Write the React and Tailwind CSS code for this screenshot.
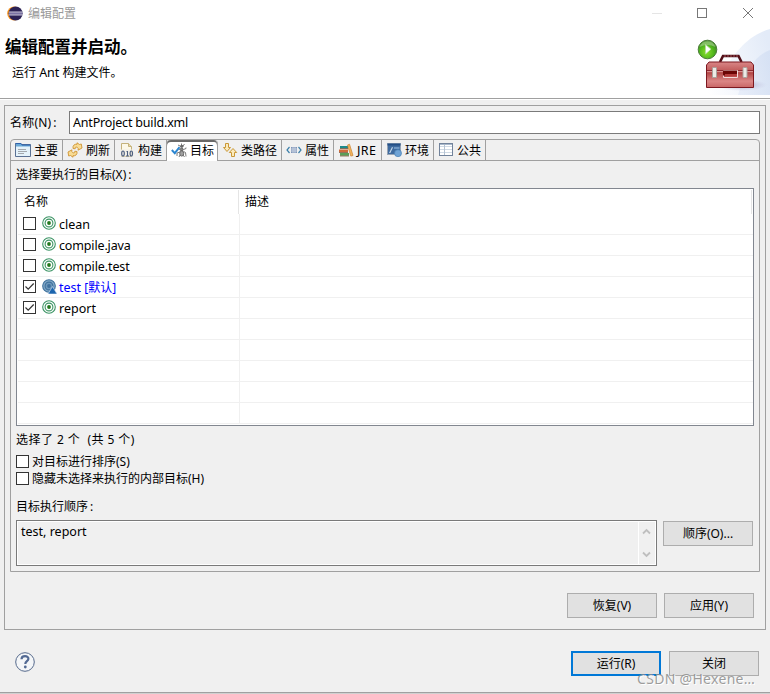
import React from 'react';
import clsx from 'clsx';

const EclipseIcon = () => (
    <svg width="16" height="16" viewBox="0 0 16 16">
        <circle cx="7.2" cy="7.500" r="7" fill="#f7941e" />
        <circle cx="8.6" cy="7.500" r="7" fill="#2c2255" />
        <path d="M2 6.100h13.3M1.7 8.900h13.8" stroke="#c9c5dd" strokeWidth="1.3" />
        <path d="M1.7 7.500h13.8" stroke="#7a72a3" strokeWidth="1.200" />
    </svg>
);

const ToolboxArt = () => (
    <svg width="90" height="70" viewBox="0 0 90 70">
        <defs>
            <linearGradient id="sky" x1="0" y1="0.6" x2="1" y2="0.3">
                <stop offset="0" stopColor="#ffffff" />
                <stop offset="0.35" stopColor="#f5f8fd" />
                <stop offset="1" stopColor="#e3ebf8" />
            </linearGradient>
            <linearGradient id="inner" x1="0" y1="0.6" x2="1" y2="0.3">
                <stop offset="0" stopColor="#e4ebf8" />
                <stop offset="1" stopColor="#d3dff3" />
            </linearGradient>
            <linearGradient id="box" x1="0" y1="0" x2="0" y2="1">
                <stop offset="0" stopColor="#d98787" />
                <stop offset="0.35" stopColor="#c15a5a" />
                <stop offset="0.45" stopColor="#b54c4c" />
                <stop offset="0.75" stopColor="#db8686" />
                <stop offset="1" stopColor="#c96666" />
            </linearGradient>
            <radialGradient id="run" cx="0.45" cy="0.65" r="0.6">
                <stop offset="0" stopColor="#8be02c" />
                <stop offset="0.65" stopColor="#4fb51c" />
                <stop offset="1" stopColor="#3f8a24" />
            </radialGradient>
            <radialGradient id="shade">
                <stop offset="0" stopColor="#8c7fa6" stopOpacity="0.75" />
                <stop offset="1" stopColor="#b9b8dc" stopOpacity="0" />
            </radialGradient>
        </defs>
        <path d="M90 4C66 11 54 30 44 45L20 70H90Z" fill="url(#sky)" />
        <path d="M90 25C76 30 65 45 58 70H90Z" fill="url(#inner)" opacity="0.800" />
        <ellipse cx="61" cy="60" rx="26" ry="6" fill="url(#shade)" />
        <path d="M40 37l3-6h15.500l3 6" fill="none" stroke="#521018" strokeWidth="2.600" />
        <path d="M44 31h14" stroke="#a05058" strokeWidth="1" strokeDasharray="2 1" />
        <path d="M29 37h42l2.500 3v22.500h-47v-22.500z" fill="url(#box)" stroke="#7d1820" strokeLinejoin="round" />
        <path d="M27 45.500h46" stroke="#8d2830" />
        <path d="M27 46.500h46" stroke="#d98f8f" />
        <path d="M43.500 45.500h14v7h-14z" fill="#bb4d4d" stroke="#f2dada" />
        <path d="M43 45.500h14v5h-14z" fill="#6b0505" />
        <path d="M45 50h12" stroke="#b33c3c" strokeWidth="2" />
        <rect x="32.500" y="42.500" width="4" height="10" rx="0.5" fill="#eceae6" stroke="#aaa39d" />
        <rect x="63" y="42.500" width="4" height="10" rx="0.500" fill="#eceae6" stroke="#aaa39d" />
        <circle cx="27.500" cy="24.500" r="9.300" fill="url(#run)" stroke="#4b7b39" />
        <path d="M19.500 22a8.500 8.500 0 0 1 16 0q-8-4-16 0z" fill="#9ccc83" opacity="0.7" />
        <path d="M25.500 19.500v9.500l5.500-4.800z" fill="#fff" stroke="#b4d99a" strokeWidth="0.800" />
    </svg>
);

const MainIcon = () => (
    <svg width="16" height="16" viewBox="0 0 16 16">
        <path d="M.5 1.500h5.500l1 1h8.500v12h-15z" fill="#e4f2fa" stroke="#5a7194" />
        <path d="M1 2h5l1 1h8v1.500h-14z" fill="#69a8d6" />
        <path d="M.5 1.500h5.500l1 1.500h8.500" fill="none" stroke="#2f63ad" />
        <path d="M3 7.500h8M3 9.500h9M3 11.500h6" stroke="#a3a8ad" />
    </svg>
);

const RefreshIcon = () => (
    <svg width="16" height="16" viewBox="0 0 16 16" fill="#f8dc94" stroke="#cf9433" strokeWidth="0.900" strokeLinejoin="round">
        <path d="M6 6.500C5.500 3.500 7.500 1.800 10 2.300V.8L12.500 2.500l1.800-.5.7 4-4 2.200.3-1.500-1.200-1.500C8.500 4.700 8 5.500 8.200 6.800z" />
        <path d="M10 9.500c.5 3-1.500 4.700-4 4.200v1.500L3.500 13.500l-1.800.5-.7-4 4-2.200-.3 1.500 1.200 1.500c1.600.5 2.100-.3 1.900-1.600z" />
    </svg>
);

const BuildIcon = () => (
    <svg width="16" height="16" viewBox="0 0 16 16">
        <path d="M2.500 1.500h7l3 3v10h-10z" fill="#fcf8e8" stroke="#c4b27c" />
        <path d="M9.500 1.500v3h3" fill="#ead9a6" stroke="#c4b27c" />
        <rect x="1.500" y="7.500" width="13" height="7" fill="#f2f0e8" opacity="0.900" />
        <ellipse cx="4" cy="11.500" rx="1.300" ry="2.500" fill="none" stroke="#4d5f80" strokeWidth="1.200" />
        <path d="M7.500 9.500h1v4.500M7 14h3" fill="none" stroke="#4d5f80" strokeWidth="1.100" />
        <ellipse cx="12.300" cy="11.500" rx="1.200" ry="2.500" fill="none" stroke="#4d5f80" strokeWidth="1.200" />
    </svg>
);

const TargetsIcon = () => (
    <svg width="16" height="16" viewBox="0 0 16 16" fill="none">
        <path d="M10.500 1.500v2M9 4L7 3M12 4l1.500-2M9 7.500L7 6.500M9 10l-3 1v3M12.500 7.500L15 6.500v-1M12.500 9.500l2 1 .5 4M9 13l-1 2M12 13l1.500 2" stroke="#6c6c6c" strokeWidth="0.900" />
        <ellipse cx="10.700" cy="4.300" rx="1.700" ry="1.500" fill="#666" />
        <ellipse cx="10.700" cy="7.500" rx="1.500" ry="1.400" fill="#888" stroke="#555" strokeWidth="0.800" />
        <ellipse cx="10.700" cy="11.500" rx="2" ry="2.600" fill="#a0a0a0" stroke="#5e5e5e" strokeWidth="0.900" />
        <path d="M.8 8l3 3.200 4.700-6" stroke="#2b86d1" strokeWidth="1.900" />
    </svg>
);

const ClasspathIcon = () => (
    <svg width="16" height="16" viewBox="0 0 16 16" fill="#fbeabb" stroke="#c99836" strokeLinejoin="round">
        <path d="M3.500 1.500h3v4h2l-3.500 4-3.500-4h2z" />
        <path d="M9.500 14.500h3v-4h2.200l-3.700-4-3.700 4h2.200z" />
    </svg>
);

const PropertiesIcon = () => (
    <svg width="16" height="16" viewBox="0 0 16 16" fill="none">
        <path d="M3.500 5L1 8l2.500 3M12.500 5L15 8l-2.500 3" stroke="#3c7fa9" strokeWidth="1.200" />
        <rect x="5" y="5" width="6" height="6" fill="#8095b8" />
        <path d="M5 7h6M5 9h6M7 5v6M9 5v6" stroke="#dce4ee" strokeWidth="0.700" />
    </svg>
);

const JreIcon = () => (
    <svg width="16" height="16" viewBox="0 0 16 16">
        <rect x="2" y="4" width="8" height="2.500" fill="#1d8a8a" />
        <rect x="1" y="7.500" width="9" height="2.800" fill="#cf6a3a" />
        <rect x="2" y="11" width="9" height="2.800" fill="#5a9e58" />
        <path d="M2 6.500h8M1 10.500h9M2 14h9" stroke="#7d5c40" strokeWidth="0.800" />
        <path d="M9.500 3l2-.8 3.500 11.300-2.200.6z" fill="#f5b65c" stroke="#c98334" strokeWidth="0.700" />
    </svg>
);

const EnvIcon = () => (
    <svg width="16" height="16" viewBox="0 0 16 16">
        <rect x="1.500" y="1.500" width="13" height="11" fill="#3f6b9f" stroke="#98a5b5" />
        <path d="M1.500 2.500h13" stroke="#234f86" strokeWidth="2" />
        <path d="M3 11l3-6 1 .6-2.700 5.400z" fill="#c6d9eb" />
        <path d="M8 5h5.500v2h-5.500z" fill="#6d97c4" />
        <circle cx="12" cy="11.200" r="3.500" fill="#6fa3d5" stroke="#4b82b6" strokeWidth="0.700" />
    </svg>
);

const CommonIcon = () => (
    <svg width="16" height="16" viewBox="0 0 16 16">
        <rect x="1.500" y="1.500" width="13" height="12" fill="#fff" stroke="#72839b" />
        <path d="M2 2.500h12" stroke="#a9b9cc" />
        <path d="M2 4.500h12M2 7.500h12M2 10.500h12" stroke="#d0dae5" />
        <path d="M6.500 3v10" stroke="#b5c3d3" />
    </svg>
);

const TargetIcon = ({ isDefault }) => {
    const color = isDefault ? '#3f719c' : '#3b9464';
    return (
        <svg width="15" height="15" viewBox="0 0 15 15">
            <circle cx="7" cy="7" r="6.300" fill={isDefault ? '#83a9c8' : '#fff'} stroke={color} strokeWidth="1.100" />
            <circle cx="7" cy="7" r="3.900" fill={isDefault ? '#6c97bb' : '#fff'} stroke={color} strokeWidth="1.100" />
            <circle cx="7" cy="7" r="1.900" fill={isDefault ? '#3d6f9c' : '#23781e'} />
            {isDefault && <path d="M10.500 7.500L15 15H6z" fill="#1c65ae" stroke="#c4d8ea" strokeWidth="0.700" />}
        </svg>
    );
};

const tabs = [
    { label: '主要', Icon: MainIcon, width: 'w-[52px]' },
    { label: '刷新', Icon: RefreshIcon, width: 'w-[52px]' },
    { label: '构建', Icon: BuildIcon, width: 'w-[52px]' },
    { label: '目标', Icon: TargetsIcon, width: 'w-[51px]', active: true },
    { label: '类路径', Icon: ClasspathIcon, width: 'w-[64px]' },
    { label: '属性', Icon: PropertiesIcon, width: 'w-[52px]' },
    { label: 'JRE', Icon: JreIcon, width: 'w-[48px]' },
    { label: '环境', Icon: EnvIcon, width: 'w-[52px]' },
    { label: '公共', Icon: CommonIcon, width: 'w-[52px]' },
];

const targets = [
    { name: 'clean' },
    { name: 'compile.java', spacing: 'tracking-[-0.15px]' },
    { name: 'compile.test', spacing: 'tracking-[-0.1px]' },
    { name: 'test', isDefault: true, checked: true },
    { name: 'report', checked: true },
];

const Checkbox = ({ checked }) => (
    <span className="w-[13px] h-[13px] shrink-0 border border-[#333] bg-white">
        {checked && (
            <svg width="11" height="11" viewBox="0 0 11 11" className="block">
                <path d="M1.500 5.500l2.700 2.700L9.700 2.500" fill="none" stroke="#333" strokeWidth="1.200" />
            </svg>
        )}
    </span>
);

const Button = ({ children, primary }) => (
    <button
        className={clsx(
            'w-[90px] h-[25px] shrink-0 bg-[#e1e1e1] flex items-center justify-center',
            primary ? 'border-2 border-[#0078d7]' : 'border border-[#adadad]'
        )}
    >
        {children}
    </button>
);

const Tab = ({ tab }) => (
    <div
        className={clsx(
            'h-full shrink-0 flex items-center gap-[3px] pl-1 border-r border-[#a0a0a0] whitespace-nowrap',
            tab.width,
            tab.active ? 'pb-px bg-white shadow-[inset_0_2px_0_#696969,-1px_0_0_#a0a0a0] rounded-t-sm' : 'border-b'
        )}
    >
        <tab.Icon />
        <span className={clsx('pt-[2px]', tab.label === 'JRE' && 'text-[12.5px] tracking-[0.4px]')}>{tab.label}</span>
    </div>
);

const TargetTable = () => (
    <div className="w-[738px] h-[238px] border border-[#828790] bg-white">
        <div className="h-[25px] flex items-center pr-px pt-px">
            <div className="w-[222px] h-6 shrink-0 pl-[7px] border-r border-[#e5e5e5] flex items-center">名称</div>
            <div className="flex-1 h-6 pl-[6px] border-r border-[#e5e5e5] flex items-center">描述</div>
        </div>
        {Array.from({ length: 10 }, (_, i) => {
            const target = targets[i];
            return (
                <div key={i} className="h-[21px] ml-px flex border-b border-[#f0f0f0]">
                    <div className="w-[222px] shrink-0 border-r border-[#f0f0f0] flex items-center pl-[5px]">
                        {target && (
                            <>
                                <div className="-mt-px flex items-center gap-[6px]">
                                    <Checkbox checked={target.checked} />
                                    <TargetIcon isDefault={target.isDefault} />
                                </div>
                                <span
                                    className={clsx(
                                        'ml-[2px] pt-[2px] text-[12.5px] whitespace-pre',
                                        target.spacing,
                                        target.isDefault && 'text-[#0000ff]'
                                    )}
                                >
                                    {target.name}
                                    {target.isDefault && <span className="text-[12px]"> [默认]</span>}
                                </span>
                            </>
                        )}
                    </div>
                </div>
            );
        })}
    </div>
);

const App = () => (
    <div className="w-[770px] h-[694px] overflow-hidden bg-[#f0f0f0] text-black text-[12px] leading-4 font-['Noto_Sans','Noto_Sans_CJK_SC',sans-serif] flex flex-col relative">
        <header className="h-[100px] shrink-0 bg-white shadow-[inset_0_-1px_0_#fff,inset_0_-2px_0_#a0a0a0] relative">
            <div className="h-[27px] flex items-center text-[#999] pl-[7px]">
                <EclipseIcon />
                <span className="ml-[5px] pt-px">编辑配置</span>
                <svg width="102" height="12" viewBox="0 0 102 12" fill="none" className="ml-auto mr-[16px] -mt-[2px]">
                    <path d="M0 6.500h10" stroke="#e5e5e5" />
                    <rect x="45.500" y="1.500" width="9" height="9" stroke="#777" />
                    <path d="M91 1l10 10M101 1l-10 10" stroke="#777" />
                </svg>
            </div>
            <div className="absolute right-0 top-[25px]">
                <ToolboxArt />
            </div>
            <h1 className="mt-[9px] ml-[5px] text-[16.5px] leading-[22px] font-bold">编辑配置并启动。</h1>
            <p className="mt-[7px] ml-[12px]">运行 <span className="text-[12.5px]">Ant</span> 构建文件。</p>
        </header>

        <main className="mt-[5px] ml-1 w-[762px] h-[525px] shrink-0 border border-[#a0a0a0] pt-[5px] pl-[5px]">
            <div className="flex items-center h-[23px]">
                <span className="w-[59px] shrink-0 pt-px tracking-[0.2px]">名称(N)<span className="ml-[2px]">:</span></span>
                <div className="w-[691px] h-[23px] border border-[#7a7a7a] bg-white flex items-center pl-[3px] pt-px text-[12.5px] tracking-[-0.18px]">
                    AntProject build.xml
                </div>
            </div>

            <section className="mt-[5px] w-[750px] h-[433px] border border-[#a0a0a0] rounded-t-[4px]">
                <div className="h-[21px] flex">
                    {tabs.map((tab) => (
                        <Tab key={tab.label} tab={tab} />
                    ))}
                    <div className="flex-1 border-b border-[#a0a0a0]" />
                </div>
                <div className="pl-[5px] flex flex-col">
                    <div className="h-[27px] flex items-center">选择要执行的目标(X)<span className="ml-[2px]">:</span></div>
                    <TargetTable />
                    <div className="mt-[5px] h-[18px] flex items-center whitespace-pre tracking-[0.45px]">选择了 2 个  (共 5 个)</div>
                    <div className="mt-[4px] h-[17px] flex items-center gap-[3px]">
                        <Checkbox />
                        <span>对目标进行排序(S)</span>
                    </div>
                    <div className="h-[17px] flex items-center gap-[3px]">
                        <Checkbox />
                        <span>隐藏未选择来执行的内部目标(H)</span>
                    </div>
                    <div className="mt-[11px] h-[18px] flex items-center">目标执行顺序<span className="ml-[2px]">:</span></div>
                    <div className="mt-[4px] flex items-start gap-[6px]">
                        <div className="w-[641px] h-[46px] shrink-0 border border-[#7a7a7a] shadow-[inset_0_0_0_1px_#fff] flex justify-between">
                            <span className="pl-1 pt-[3px] text-[12.5px]">test, report</span>
                            <div className="w-[18px] border-l border-white flex flex-col justify-between items-center py-[7px] pr-[2px]">
                                <svg width="9" height="7" viewBox="0 0 9 7" fill="none" stroke="#bfbfbf" strokeWidth="1.800">
                                    <path d="M1 5.500l3.500-3.500L8 5.500" />
                                </svg>
                                <svg width="9" height="7" viewBox="0 0 9 7" fill="none" stroke="#bfbfbf" strokeWidth="1.800">
                                    <path d="M1 1.500l3.500 3.500L8 1.500" />
                                </svg>
                            </div>
                        </div>
                        <div className="pt-px">
                            <Button>顺序(O)...</Button>
                        </div>
                    </div>
                </div>
            </section>

            <div className="mt-[21px] pr-[11px] flex justify-end gap-[7px]">
                <Button>恢复(V)</Button>
                <Button>应用(Y)</Button>
            </div>
        </main>

        <footer className="mt-[21px] h-[25px] shrink-0 pl-[15px] pr-[11px] flex items-center">
            <svg width="20" height="20" viewBox="0 0 20 20" fill="none" className="-mt-[3px]">
                <circle cx="10" cy="10" r="9.300" fill="#f4f6f8" stroke="#566a8c" />
                <path d="M6.500 7.300c0-4.200 7.200-4 6.900-.5-.2 2.400-3.100 2.300-3.100 5.200" stroke="#536a93" strokeWidth="2.200" />
                <circle cx="10.300" cy="15" r="1.400" fill="#536a93" />
            </svg>
            <div className="ml-auto flex gap-2">
                <Button primary>运行(R)</Button>
                <Button>关闭</Button>
            </div>
        </footer>
        <div className="mt-auto h-[2px] shrink-0 bg-[#d0d0d0] border-t border-[#a0a0a0]" />
        <div className="absolute left-[637px] top-[670px] text-[14px] leading-[18px] tracking-[0.3px] text-[#8c8c8c]/85 [text-shadow:1px_1px_0_#fff] whitespace-nowrap">
            CSDN @Hexene…
        </div>
    </div>
);

export default App;
